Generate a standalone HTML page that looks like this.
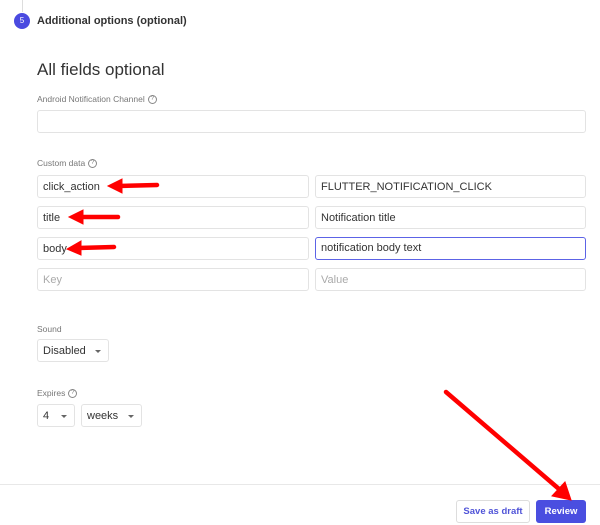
<!DOCTYPE html>
<html><head><style>
body{margin:0;width:600px;height:525px;background:#fff;font-family:"Liberation Sans",sans-serif;position:relative;overflow:hidden;color:#333}
.a{position:absolute}
.in{position:absolute;border:1px solid #e3e3e3;border-radius:3px;box-sizing:border-box;height:23px;font-size:11px;line-height:22px;padding-left:5px;color:#333}
.lb{position:absolute;font-size:8.5px;color:#777}
.q{display:inline-block;width:7px;height:7px;border:1px solid #888;border-radius:50%;font-size:6px;line-height:7px;text-align:center;margin-left:3px;vertical-align:middle;color:#777}
.dd{position:absolute;right:7px;top:10px;border-left:3px solid transparent;border-right:3px solid transparent;border-top:3px solid #666}
</style></head><body>
<div class="a" style="left:22px;top:0;width:1px;height:12px;background:#ddd"></div>
<div class="a" style="left:14px;top:13px;width:16px;height:16px;border-radius:50%;background:#4a4ae0;color:#fff;font-size:8px;text-align:center;line-height:16px">5</div>
<div class="a" style="left:37px;top:15px;font-size:11px;font-weight:bold;color:#333">Additional options (optional)</div>
<div class="a" style="left:37px;top:60px;font-size:17px;color:#333">All fields optional</div>
<div class="lb" style="left:37px;top:94px">Android Notification Channel<span class="q">?</span></div>
<div class="in" style="left:37px;top:110px;width:549px"></div>
<div class="lb" style="left:37px;top:158px">Custom data<span class="q">?</span></div>
<div class="in" style="left:37px;top:175px;width:272px">click_action</div>
<div class="in" style="left:315px;top:175px;width:271px">FLUTTER_NOTIFICATION_CLICK</div>
<div class="in" style="left:37px;top:206px;width:272px">title</div>
<div class="in" style="left:315px;top:206px;width:271px">Notification title</div>
<div class="in" style="left:37px;top:237px;width:272px">body</div>
<div class="in" style="left:315px;top:237px;width:271px;border:1.5px solid #5c63e6;line-height:21px">notification body text</div>
<div class="in" style="left:37px;top:268px;width:272px;color:#aaa">Key</div>
<div class="in" style="left:315px;top:268px;width:271px;color:#aaa">Value</div>
<div class="lb" style="left:37px;top:324px">Sound</div>
<div class="in" style="left:37px;top:339px;width:72px">Disabled<span class="dd"></span></div>
<div class="lb" style="left:37px;top:388px">Expires<span class="q">?</span></div>
<div class="in" style="left:37px;top:404px;width:38px">4<span class="dd"></span></div>
<div class="in" style="left:81px;top:404px;width:61px">weeks<span class="dd"></span></div>
<div class="a" style="left:0;top:484px;width:600px;height:1px;background:#e8e8e8"></div>
<div class="a" style="left:456px;top:500px;width:74px;height:23px;border:1px solid #ddd;border-radius:3px;box-sizing:border-box;font-size:9.5px;font-weight:bold;color:#5054d8;text-align:center;line-height:21px">Save as draft</div>
<div class="a" style="left:536px;top:500px;width:50px;height:23px;background:#4a4ee0;border-radius:3px;font-size:9.5px;font-weight:bold;color:#fff;text-align:center;line-height:23px">Review</div>
<svg class="a" style="left:0;top:0" width="600" height="525">
<g stroke="#f00" stroke-width="4.5" stroke-linecap="round" fill="#f00">
<line x1="157" y1="185" x2="118" y2="186"/><polygon points="108,186 122,179 122,193" stroke-width="1"/>
<line x1="118" y1="217" x2="80" y2="217"/><polygon points="69,217 83,210 83,224" stroke-width="1"/>
<line x1="114" y1="247" x2="78" y2="248"/><polygon points="67,249 81,241 81,255" stroke-width="1"/>
<line x1="446" y1="392" x2="559" y2="489"/><polygon points="571,500 552,496 565,482" stroke-width="1"/>
</g></svg>
</body></html>
